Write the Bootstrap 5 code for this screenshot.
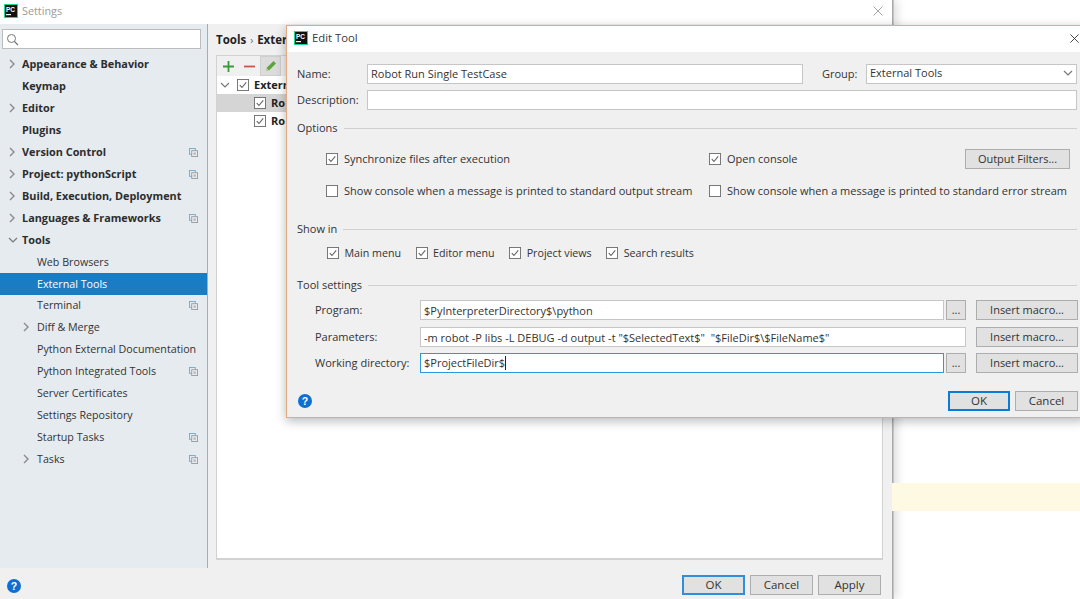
<!DOCTYPE html>
<html lang="en">
<head>
<meta charset="utf-8">
<title>Settings</title>
<link href="https://cdn.jsdelivr.net/npm/bootstrap@5.3.0/dist/css/bootstrap.min.css" rel="stylesheet">
<style>
html,body{height:599px;overflow:hidden;background:#fff}
body{font-family:"Open Sans","Noto Sans",sans-serif;font-size:11px;color:#333;line-height:16px;position:relative;width:1080px}
.desk{height:599px}
.win{width:892px;height:599px;background:#f0f0f0;box-shadow:1px 0 0 #aaa,2px 0 0 #c4c4c4,5px 0 9px #ddd;position:relative;flex:none}
.tbar{height:24px;background:#fff;padding-left:4px;padding-bottom:3px;color:#9a9a9a;font-size:10.8px;gap:4px}
.close-x{margin-left:auto;margin-right:9px}
.body-row{height:544px}
.side{width:208px;background:#e6ebf0;border-right:1px solid #a9adb0;flex:none}
.search{height:20px;margin:5px 6px 4px 2px;background:#fff;border:1px solid #bcbcbc;padding-left:3px}
.srow{height:22px;color:#333;padding-right:9px;font-size:10.7px;white-space:nowrap}
.srow.top{font-weight:700;color:#2d2d2d;font-size:10.85px}
.srow.sel{background:#1a7dc4;color:#fff;margin-bottom:-1px}
.arr{width:22px;padding-left:8px;flex:none}
.arr2{width:37px;padding-left:22px;flex:none}
.gear{margin-left:auto}
.main{padding:8px 9px 8px 8px;min-width:0;flex:1}
.crumb{height:23px;font-weight:700;font-size:11.5px;color:#222;white-space:nowrap;gap:4px}
.crumb i{font-style:normal;font-weight:400;color:#666;font-size:10px}
.panel{height:505px;background:#fff;border:1px solid #d2d2d2;border-bottom-width:2px}
.tools{height:20px;background:#f0f0f0;padding-left:1px}
.tico{width:21px;height:20px}
.tico.on{background:#dcdcdc;border:1px solid #cfcfcf}
.trow{height:18px;font-weight:700;white-space:nowrap;color:#222;gap:5px}
.t-root{padding-left:3px}
.t-root .twist{margin-right:2px}
.t-leaf{padding-left:37px}
.trow.cur{background:#d5d5d5}
.tick{flex:none;display:block}
.dlg{position:absolute;left:286px;top:25px;width:800px;height:393px;background:#f0f0f0;border:1px solid #e3a983;border-width:1px 0 1px 1px;box-shadow:0 3px 10px rgba(0,0,0,.28)}
.dhead{height:26px;background:#fff;padding-left:7px;padding-bottom:2px;gap:4px;font-size:11.3px;color:#3a3a3a}
.dclose{left:783px;top:8px;color:#333}
.dbody{padding:12px 3px 0 10px;width:793px}
.fld{height:20px;background:#fff;border:1px solid #c6c6c6;border-radius:0;padding:0 3px;font-size:11px;line-height:18px;color:#333;box-shadow:none;min-height:0;font-family:inherit}
.fld:focus{border-color:#c6c6c6;box-shadow:none}
.fld.act,.fld.act:focus{border-color:#2f97e0}
.lab1{width:70px;flex:none}
.r-name{height:20px}
.r-name .fld{padding-bottom:2px}
.r-desc{height:20px;margin-top:6px}
.grpl{margin-left:19px;width:44px;flex:none}
.grp{width:211px;flex:none}
.sect{height:16px;gap:6px}
.sect::after{content:"";flex:1;border-top:1px solid #cfcfcf}
.s1{margin-top:10px}.s2{margin-top:22px}.s3{margin-top:16px}
.chk{gap:6px;white-space:nowrap}
.opt{height:16px;padding-left:29px}
.o1{margin-top:15px}.o2{margin-top:16px}.o3{margin-top:8px}
.col-a{width:383px;flex:none}
.col-b{width:256px;flex:none}
.btnx{background:#e1e1e1;border:1px solid #adadad;border-radius:0;color:#333;font-size:11px;line-height:16px;padding:0;height:20px;font-family:inherit}
.bfilter{width:105px}
.chrow{gap:14.5px;padding-left:30px;font-size:10.7px}
.chrow .chk{gap:5.5px}
.prow{height:20px;margin-top:7px;padding-left:18px}
.prow.last{margin-top:6px}
.plab{width:105px;flex:none;white-space:nowrap}
.pin1{width:524px;flex:none}
.pin2{width:546px;flex:none}
.dots{width:20px;margin-left:2px;flex:none;line-height:14px}
.macro{width:102px;margin-left:10px;flex:none}
.foot{margin-top:18px;margin-right:-1px;height:20px;padding-left:1px}
.help{display:block;flex:none}
.okb{width:62px;margin-left:auto;border:2px solid #0a7bd6;font-size:11.5px}
.cb{width:63px;margin-left:5px;font-size:11.5px}
.wfoot{height:31px;gap:5px;padding:7px 11px 0 7px}
.wfoot .help{margin-top:4px}
.wok{width:63px;margin-left:auto;border:2px solid #2f8fdc;font-size:11.5px}
.wb{width:63px;font-size:11.5px}
.pane{flex:1;position:relative;padding-top:483px}
.band{height:28px;background:#fdf9e3}
.caret{display:inline-block;width:1px;height:14px;background:#222;vertical-align:-3px}
</style>
</head>
<body>
<svg width="0" height="0" class="position-absolute">
<defs>
<symbol id="pc" viewBox="0 0 14 14"><rect width="14" height="14" fill="#21d789"/><rect x="1" y="1" width="12" height="12" fill="#111"/><text x="2" y="7.6" font-family="Liberation Sans" font-size="6.5" font-weight="700" fill="#fff">PC</text><rect x="2" y="10" width="5" height="1.2" fill="#fff"/></symbol>
<symbol id="ck" viewBox="0 0 13 13"><rect x=".5" y=".5" width="12" height="12" fill="#fff" stroke="#6f6f6f"/><path d="M3 6.6 5.4 9.2 10 3.6" fill="none" stroke="#666" stroke-width="1.2"/></symbol>
<symbol id="un" viewBox="0 0 13 13"><rect x=".5" y=".5" width="12" height="12" fill="#fff" stroke="#6f6f6f"/></symbol>
<symbol id="ra" viewBox="0 0 8 10"><path d="M2 1 6 5 2 9" fill="none" stroke="#8b8b8b" stroke-width="1.4"/></symbol>
<symbol id="da" viewBox="0 0 10 8"><path d="M1 2 5 6 9 2" fill="none" stroke="#777" stroke-width="1.2"/></symbol>
<symbol id="cfg" viewBox="0 0 10 10"><rect x=".5" y=".5" width="6.5" height="6.5" fill="none" stroke="#6fa9cf"/><rect x="3" y="3" width="6.5" height="6.5" fill="#e6ebf0" stroke="#9a9a9a"/><rect x="5" y="5" width="2.5" height="2.5" fill="#b5b5b5"/></symbol>
<symbol id="hp" viewBox="0 0 14 14"><circle cx="7" cy="7" r="7" fill="#0f6fd0"/><text x="7" y="11" text-anchor="middle" font-family="Liberation Sans" font-size="10.5" font-weight="700" fill="#fff">?</text></symbol>
<symbol id="xx" viewBox="0 0 10 10"><path d="M.5.5 9.5 9.5M9.5.5.5 9.5" fill="none" stroke="currentColor" stroke-width="1"/></symbol>
</defs>
</svg>

<div class="desk d-flex">
  <div class="win d-flex flex-column">
    <div class="tbar d-flex align-items-center">
      <svg width="14" height="14"><use href="#pc"/></svg><span>Settings</span>
      <svg class="close-x" width="10" height="10" style="color:#a8a8a8"><use href="#xx"/></svg>
    </div>
    <div class="body-row d-flex">
      <div class="side">
        <div class="search d-flex align-items-center"><svg width="13" height="13" viewBox="0 0 13 13"><circle cx="5.5" cy="5.5" r="4" fill="none" stroke="#777"/><path d="M8.5 8.5 12 12" stroke="#777" stroke-width="1.2"/></svg></div>
        <div class="srow top d-flex align-items-center"><span class="arr"><svg width="8" height="10" class="tick"><use href="#ra"/></svg></span>Appearance &amp; Behavior</div>
        <div class="srow top d-flex align-items-center"><span class="arr"></span>Keymap</div>
        <div class="srow top d-flex align-items-center"><span class="arr"><svg width="8" height="10" class="tick"><use href="#ra"/></svg></span>Editor</div>
        <div class="srow top d-flex align-items-center"><span class="arr"></span>Plugins</div>
        <div class="srow top d-flex align-items-center"><span class="arr"><svg width="8" height="10" class="tick"><use href="#ra"/></svg></span>Version Control<svg class="gear" width="9" height="9"><use href="#cfg"/></svg></div>
        <div class="srow top d-flex align-items-center"><span class="arr"><svg width="8" height="10" class="tick"><use href="#ra"/></svg></span>Project: pythonScript<svg class="gear" width="9" height="9"><use href="#cfg"/></svg></div>
        <div class="srow top d-flex align-items-center"><span class="arr"><svg width="8" height="10" class="tick"><use href="#ra"/></svg></span>Build, Execution, Deployment</div>
        <div class="srow top d-flex align-items-center"><span class="arr"><svg width="8" height="10" class="tick"><use href="#ra"/></svg></span>Languages &amp; Frameworks<svg class="gear" width="9" height="9"><use href="#cfg"/></svg></div>
        <div class="srow top d-flex align-items-center"><span class="arr"><svg width="10" height="8" class="tick"><use href="#da"/></svg></span>Tools</div>
        <div class="srow d-flex align-items-center"><span class="arr2"></span>Web Browsers</div>
        <div class="srow sel d-flex align-items-center"><span class="arr2"></span>External Tools</div>
        <div class="srow d-flex align-items-center"><span class="arr2"></span>Terminal<svg class="gear" width="9" height="9"><use href="#cfg"/></svg></div>
        <div class="srow d-flex align-items-center"><span class="arr2"><svg width="8" height="10" class="tick"><use href="#ra"/></svg></span>Diff &amp; Merge</div>
        <div class="srow d-flex align-items-center"><span class="arr2"></span>Python External Documentation</div>
        <div class="srow d-flex align-items-center"><span class="arr2"></span>Python Integrated Tools<svg class="gear" width="9" height="9"><use href="#cfg"/></svg></div>
        <div class="srow d-flex align-items-center"><span class="arr2"></span>Server Certificates</div>
        <div class="srow d-flex align-items-center"><span class="arr2"></span>Settings Repository</div>
        <div class="srow d-flex align-items-center"><span class="arr2"></span>Startup Tasks<svg class="gear" width="9" height="9"><use href="#cfg"/></svg></div>
        <div class="srow d-flex align-items-center"><span class="arr2"><svg width="8" height="10" class="tick"><use href="#ra"/></svg></span>Tasks<svg class="gear" width="9" height="9"><use href="#cfg"/></svg></div>
      </div>
      <div class="main">
        <div class="crumb d-flex align-items-start">Tools <i>›</i> Exter</div>
        <div class="panel">
          <div class="tools d-flex align-items-center">
            <span class="tico d-flex align-items-center justify-content-center"><svg width="11" height="11" viewBox="0 0 11 11"><path d="M5.5 0v11M0 5.5h11" stroke="#3a9a3a" stroke-width="1.8"/></svg></span>
            <span class="tico d-flex align-items-center justify-content-center"><svg width="11" height="11" viewBox="0 0 11 11"><path d="M0 5.5h11" stroke="#c9564c" stroke-width="1.8"/></svg></span>
            <span class="tico on d-flex align-items-center justify-content-center"><svg width="12" height="12" viewBox="0 0 12 12"><path d="M1 11 2 7.5 8.5 1 11 3.5 4.5 10Z" fill="#5aa63c"/><path d="M1 11 2 8.5 3.5 10Z" fill="#e0d9a0"/></svg></span>
          </div>
          <div class="trow t-root d-flex align-items-center"><svg width="10" height="8" class="tick twist"><use href="#da"/></svg><svg width="12" height="12" class="tick"><use href="#ck"/></svg>Extern</div>
          <div class="trow t-leaf cur d-flex align-items-center"><svg width="12" height="12" class="tick"><use href="#ck"/></svg>Ro</div>
          <div class="trow t-leaf d-flex align-items-center"><svg width="12" height="12" class="tick"><use href="#ck"/></svg>Ro</div>
        </div>
      </div>
    </div>
    <div class="wfoot d-flex align-items-start">
      <svg class="help" width="14" height="14"><use href="#hp"/></svg>
      <button type="button" class="btn btnx wok">OK</button>
      <button type="button" class="btn btnx wb">Cancel</button>
      <button type="button" class="btn btnx wb">Apply</button>
    </div>
  </div>
  <div class="pane"><div class="band"></div></div>
</div>

<div class="dlg">
  <div class="dhead d-flex align-items-center"><svg width="14" height="14"><use href="#pc"/></svg><span>Edit Tool</span>
    <svg class="position-absolute dclose" width="9" height="9"><use href="#xx"/></svg></div>
  <div class="dbody">
    <div class="r-name d-flex align-items-center">
      <span class="lab1">Name:</span>
      <input class="form-control fld flex-grow-1" value="Robot Run Single TestCase">
      <span class="grpl">Group:</span>
      <div class="fld grp d-flex align-items-center justify-content-between">External Tools<svg width="10" height="8"><use href="#da"/></svg></div>
    </div>
    <div class="r-desc d-flex align-items-center"><span class="lab1">Description:</span><input class="form-control fld flex-grow-1"></div>
    <div class="sect s1 d-flex align-items-center">Options</div>
    <div class="opt o1 d-flex align-items-center">
      <span class="col-a chk d-flex align-items-center"><svg width="12" height="12" class="tick"><use href="#ck"/></svg>Synchronize files after execution</span>
      <span class="col-b chk d-flex align-items-center"><svg width="12" height="12" class="tick"><use href="#ck"/></svg>Open console</span>
      <button type="button" class="btn btnx bfilter">Output Filters...</button>
    </div>
    <div class="opt o2 d-flex align-items-center">
      <span class="col-a chk d-flex align-items-center"><svg width="12" height="12" class="tick"><use href="#un"/></svg>Show console when a message is printed to standard output stream</span>
      <span class="chk d-flex align-items-center"><svg width="12" height="12" class="tick"><use href="#un"/></svg>Show console when a message is printed to standard error stream</span>
    </div>
    <div class="sect s2 d-flex align-items-center">Show in</div>
    <div class="o3 chrow d-flex align-items-center">
      <span class="chk d-flex align-items-center"><svg width="12" height="12" class="tick"><use href="#ck"/></svg>Main menu</span>
      <span class="chk d-flex align-items-center"><svg width="12" height="12" class="tick"><use href="#ck"/></svg>Editor menu</span>
      <span class="chk d-flex align-items-center"><svg width="12" height="12" class="tick"><use href="#ck"/></svg>Project views</span>
      <span class="chk d-flex align-items-center"><svg width="12" height="12" class="tick"><use href="#ck"/></svg>Search results</span>
    </div>
    <div class="sect s3 d-flex align-items-center">Tool settings</div>
    <div class="prow d-flex align-items-center">
      <span class="plab">Program:</span><input class="form-control fld pin1" value="$PyInterpreterDirectory$\python">
      <button type="button" class="btn btnx dots">...</button><button type="button" class="btn btnx macro">Insert macro...</button>
    </div>
    <div class="prow d-flex align-items-center">
      <span class="plab">Parameters:</span><input class="form-control fld pin2" value='-m robot -P libs -L DEBUG -d output -t "$SelectedText$"  "$FileDir$\$FileName$"'>
      <button type="button" class="btn btnx macro">Insert macro...</button>
    </div>
    <div class="prow last d-flex align-items-center">
      <span class="plab">Working directory:</span><div class="fld act pin1">$ProjectFileDir$<span class="caret"></span></div>
      <button type="button" class="btn btnx dots">...</button><button type="button" class="btn btnx macro">Insert macro...</button>
    </div>
    <div class="foot d-flex align-items-center">
      <svg class="help" width="14" height="14"><use href="#hp"/></svg>
      <button type="button" class="btn btnx okb">OK</button>
      <button type="button" class="btn btnx cb">Cancel</button>
    </div>
  </div>
</div>
</body>
</html>
